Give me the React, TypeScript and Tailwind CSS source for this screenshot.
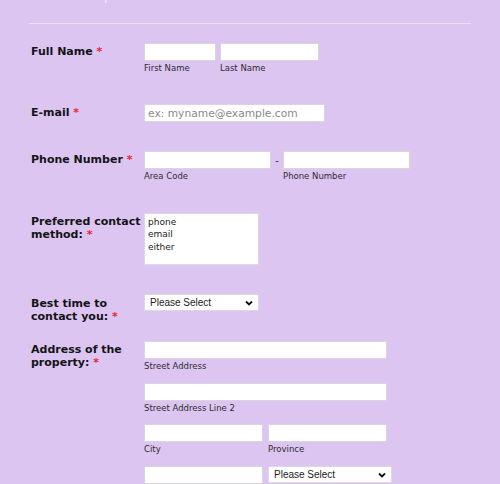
import React from "react";

const labelCls = "w-[113px] shrink-0 pt-[2px] text-[11px] font-bold leading-[13px] text-[#141414]";
const inputCls =
  "block h-[18px] border border-[#d9d4de] bg-white px-[3px] text-[10.7px] text-[#333] outline-none placeholder:text-[#8a8a8a]";
const subCls = "mt-[2px] text-[8.5px] leading-[11px] text-[#2d2d2d]";

function Req() {
  return <span className="text-[#f0223a]"> *</span>;
}

function Field({ width, sub, placeholder }: { width: string; sub?: string; placeholder?: string }) {
  return (
    <div className="flex flex-col">
      <input className={`${inputCls} ${width}`} placeholder={placeholder} />
      {sub && <span className={subCls}>{sub}</span>}
    </div>
  );
}

function FakeSelect({ width }: { width: string }) {
  return (
    <div
      className={`flex h-[17px] items-center justify-between border border-[#dcd7e0] bg-white pl-[5px] pr-[5px] font-['Liberation_Sans',Arial,sans-serif] text-[10px] text-[#222] ${width}`}
    >
      <span>Please Select</span>
      <svg width="8" height="6" viewBox="0 0 8 6">
        <polyline points="1,1.5 4,4.5 7,1.5" fill="none" stroke="#111" strokeWidth="1.8" />
      </svg>
    </div>
  );
}

export default function App() {
  return (
    <div className="h-[484px] overflow-hidden bg-[#dcc5f1] font-['DejaVu_Sans',Verdana,sans-serif]">
      <div className="px-[29px]">
        <p className="-mt-[12px] pl-[1px] text-[13px] leading-[16px] text-[#f3ecfa]">
          Please complete and submit this form.
        </p>
        <div className="mt-[19px] h-px w-[442px] bg-[#ece3f5]" />
      </div>

      <div className="pl-[31px]">
        {/* Full name */}
        <div className="mt-[19px] flex">
          <div className={labelCls}>
            Full Name
            <Req />
          </div>
          <div className="flex gap-[4px]">
            <Field width="w-[72px]" sub="First Name" />
            <Field width="w-[99px]" sub="Last Name" />
          </div>
        </div>

        {/* Email */}
        <div className="mt-[30px] flex">
          <div className={labelCls}>
            E-mail
            <Req />
          </div>
          <Field width="w-[181px]" placeholder="ex: myname@example.com" />
        </div>

        {/* Phone */}
        <div className="mt-[29px] flex">
          <div className={labelCls}>
            Phone Number
            <Req />
          </div>
          <div className="flex items-start">
            <Field width="w-[127px]" sub="Area Code" />
            <span className="flex h-[18px] w-[12px] items-center justify-center text-[10px] text-[#333]">-</span>
            <Field width="w-[127px]" sub="Phone Number" />
          </div>
        </div>

        {/* Preferred contact */}
        <div className="mt-[31px] flex">
          <div className={labelCls}>
            Preferred contact method:
            <Req />
          </div>
          <div className="h-[52px] w-[115px] border border-[#dcd7e0] bg-white pl-[3px] pt-[2px] text-[9px] leading-[12.3px] text-[#222]">
            <div>phone</div>
            <div>email</div>
            <div>either</div>
          </div>
        </div>

        {/* Best time */}
        <div className="mt-[29px] flex">
          <div className={`${labelCls} pt-[3px] pr-[10px]`}>
            Best time to contact you:
            <Req />
          </div>
          <FakeSelect width="w-[115px]" />
        </div>

        {/* Address */}
        <div className="mt-[18px] flex">
          <div className={`${labelCls} pr-[10px]`}>
            Address of the property:
            <Req />
          </div>
          <div className="flex flex-col">
            <Field width="w-[243px]" sub="Street Address" />
            <div className="mt-[11px]">
              <Field width="w-[243px]" sub="Street Address Line 2" />
            </div>
            <div className="mt-[10px] flex gap-[5px]">
              <Field width="w-[119px]" sub="City" />
              <Field width="w-[119px]" sub="Province" />
            </div>
            <div className="mt-[11px] flex gap-[5px]">
              <Field width="w-[119px]" sub="Postal Code" />
              <FakeSelect width="w-[124px]" />
            </div>
          </div>
        </div>
      </div>
    </div>
  );
}
